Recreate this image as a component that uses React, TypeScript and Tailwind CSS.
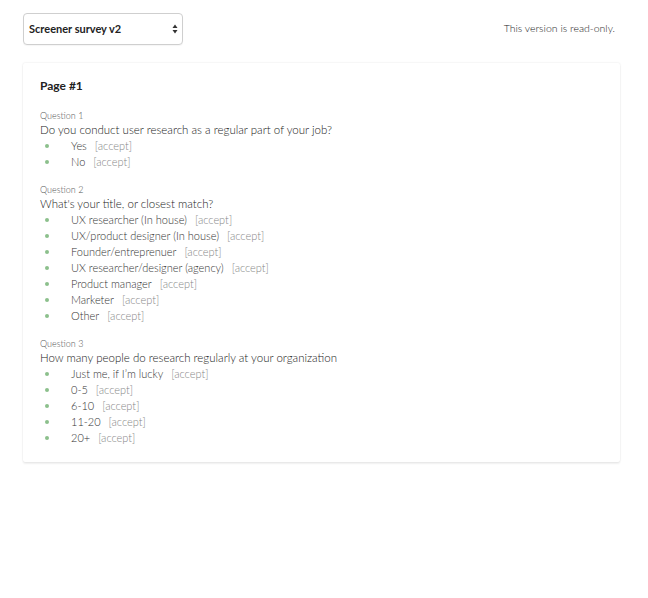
type Question = {
  label: string;
  text: string;
  options: string[];
};

const questions: Question[] = [
  {
    label: 'Question 1',
    text: 'Do you conduct user research as a regular part of your job?',
    options: ['Yes', 'No'],
  },
  {
    label: 'Question 2',
    text: "What's your title, or closest match?",
    options: [
      'UX researcher (In house)',
      'UX/product designer (In house)',
      'Founder/entreprenuer',
      'UX researcher/designer (agency)',
      'Product manager',
      'Marketer',
      'Other',
    ],
  },
  {
    label: 'Question 3',
    text: 'How many people do research regularly at your organization',
    options: ['Just me, if I\u2019m lucky', '0-5', '6-10', '11-20', '20+'],
  },
];

function VersionSelect() {
  return (
    <div className="flex h-[32px] w-[160px] items-center justify-between rounded-[4px] border border-[#cfcfcf] bg-white pl-[5px] pr-[3px] shadow-[0_1px_1px_rgba(0,0,0,0.04)]">
      <span className="text-[11px] font-bold text-[#222]">Screener survey v2</span>
      <svg width="6" height="10" viewBox="0 0 6 10" className="mr-[1px]">
        <path d="M3 0.5 L5.5 4 H0.5 Z" fill="#333" />
        <path d="M3 9.5 L5.5 6 H0.5 Z" fill="#333" />
      </svg>
    </div>
  );
}

function QuestionBlock({ q }: { q: Question }) {
  return (
    <div className="font-light">
      <div className="text-[9px] leading-[12px] text-[#555]">{q.label}</div>
      <div className="text-[11.5px] leading-[16px] text-[#222]">{q.text}</div>
      <ul>
        {q.options.map((opt) => (
          <li key={opt} className="flex h-[16px] items-center text-[11px]">
            <span className="ml-[5px] h-[4px] w-[4px] rounded-full bg-[#8cc08c]" />
            <span className="ml-[22px] text-[#333]">{opt}</span>
            <span className="ml-[8px] text-[#888]">[accept]</span>
          </li>
        ))}
      </ul>
    </div>
  );
}

export default function App() {
  return (
    <div
      className="min-h-[598px] bg-white px-[23px] pt-[13px]"
      style={{ fontFamily: 'Lato, "Noto Sans", sans-serif' }}
    >
      <div className="flex items-center justify-between">
        <VersionSelect />
        <span className="mr-[10px] text-[10.5px] font-light text-[#222]">This version is read-only.</span>
      </div>

      <div className="mt-[18px] w-[597px] rounded-[2px] bg-white pb-[16px] pl-[17px] pr-[17px] pt-[14px] shadow-[0_0_2px_rgba(0,0,0,0.12),0_2px_2px_rgba(0,0,0,0.06)]">
        <h2 className="text-[12px] font-bold leading-[18px] text-[#222]">Page #1</h2>
        <div className="mt-[15px] flex flex-col gap-[14px]">
          {questions.map((q) => (
            <QuestionBlock key={q.label} q={q} />
          ))}
        </div>
      </div>
    </div>
  );
}
